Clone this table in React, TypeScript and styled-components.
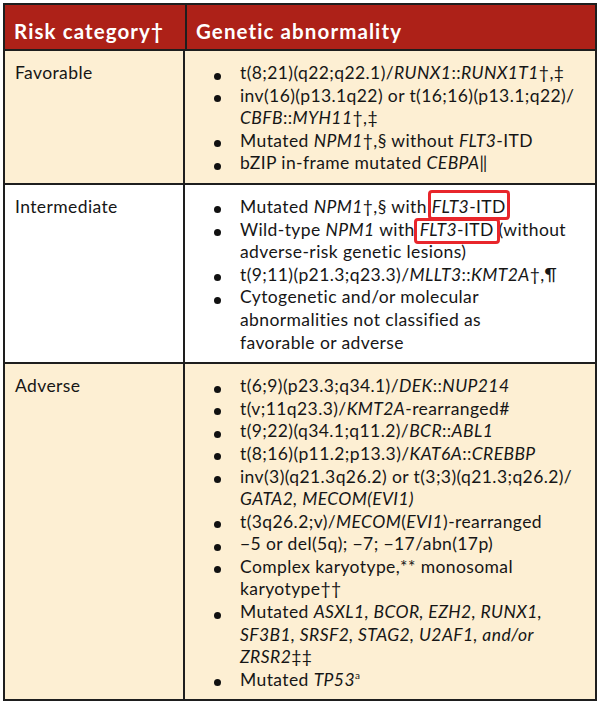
import React from "react";
import styled, { createGlobalStyle } from "styled-components";

const Global = createGlobalStyle`
  html, body { margin: 0; padding: 0; background: #ffffff; }
  body { font-family: Lato, "Noto Sans", sans-serif; color: #161616; }
`;

const Page = styled.div`
  padding: 3px;
  width: 600px;
  box-sizing: border-box;
`;

const Table = styled.div`
  border: 2px solid #1e1e1e;
  width: 594px;
  box-sizing: border-box;
  display: flex;
  flex-direction: column;
`;

const Row = styled.div<{ $bg: string; $last?: boolean }>`
  display: grid;
  grid-template-columns: 180px 1fr;
  background: ${(p) => p.$bg};
  border-bottom: ${(p) => (p.$last ? "none" : "2px solid #1e1e1e")};
`;

const HeadCell = styled.div`
  height: 44px;
  box-sizing: border-box;
  padding: 15px 0 0 9px;
  color: #ffffff;
  font-weight: 700;
  font-size: 20.5px;
  letter-spacing: 1.1px;
  line-height: 22px;
  white-space: nowrap;
  & + & { border-left: 2px solid #1e1e1e; }
`;

const CatCell = styled.div`
  padding: 11px 0 8px 10px;
  font-size: 17.5px;
  letter-spacing: 0.4px;
  line-height: 22.6px;
  border-right: 2px solid #1e1e1e;
`;

const List = styled.ul`
  list-style: none;
  margin: 0;
  padding: 11px 0 8px 0;
  font-size: 17.5px;
  letter-spacing: 0.4px;
  line-height: 22.6px;
`;

const Item = styled.li`
  position: relative;
  padding-left: 55px;
  white-space: nowrap;
  &::before {
    content: "";
    position: absolute;
    left: 28.5px;
    top: 10.5px;
    width: 7px;
    height: 7px;
    border-radius: 50%;
    background: #111;
  }
`;

const G = styled.i`
  font-style: italic;
`;

const Sup = styled.sup`
  font-size: 10px;
  line-height: 0;
  vertical-align: 7px;
`;

const Mark = styled.span<{ $t: number; $b: number; $l: number; $r: number }>`
  position: relative;
  &::after {
    content: "";
    position: absolute;
    top: ${(p) => p.$t}px;
    bottom: ${(p) => p.$b}px;
    left: ${(p) => p.$l}px;
    right: ${(p) => p.$r}px;
    border: 3px solid #e8262b;
    border-radius: 4px;
    pointer-events: none;
  }
`;

export default function App() {
  return (
    <Page>
      <Global />
      <Table>
        <Row $bg="#ad2118">
          <HeadCell>Risk category†</HeadCell>
          <HeadCell>Genetic abnormality</HeadCell>
        </Row>
        <Row $bg="#fdefd3">
          <CatCell>Favorable</CatCell>
          <List>
            <Item>
              t(8;21)(q22;q22.1)/<G>RUNX1</G>::<G>RUNX1T1</G>†,‡
            </Item>
            <Item>
              inv(16)(p13.1q22) or t(16;16)(p13.1;q22)/
              <br />
              <G>CBFB</G>::<G>MYH11</G>†,‡
            </Item>
            <Item>
              Mutated <G>NPM1</G>†,§ without <G>FLT3</G>-ITD
            </Item>
            <Item>
              bZIP in-frame mutated <G>CEBPA</G>‖
            </Item>
          </List>
        </Row>
        <Row $bg="#ffffff">
          <CatCell>Intermediate</CatCell>
          <List>
            <Item>
              Mutated <G>NPM1</G>†,§ with{" "}
              <Mark $t={-6} $b={-3} $l={-4} $r={-4}>
                <G>FLT3</G>-ITD
              </Mark>
            </Item>
            <Item>
              Wild-type <G>NPM1</G> with{" "}
              <Mark $t={-1} $b={-4} $l={-6} $r={-6}>
                <G>FLT3</G>-ITD
              </Mark>{" "}
              (without
              <br />
              adverse-risk genetic lesions)
            </Item>
            <Item>
              t(9;11)(p21.3;q23.3)/<G>MLLT3</G>::<G>KMT2A</G>†,¶
            </Item>
            <Item>
              Cytogenetic and/or molecular
              <br />
              abnormalities not classified as
              <br />
              favorable or adverse
            </Item>
          </List>
        </Row>
        <Row $bg="#fdefd3" $last>
          <CatCell>Adverse</CatCell>
          <List>
            <Item>
              t(6;9)(p23.3;q34.1)/<G>DEK</G>::<G>NUP214</G>
            </Item>
            <Item>
              t(v;11q23.3)/<G>KMT2A</G>-rearranged#
            </Item>
            <Item>
              t(9;22)(q34.1;q11.2)/<G>BCR</G>::<G>ABL1</G>
            </Item>
            <Item>
              t(8;16)(p11.2;p13.3)/<G>KAT6A</G>::<G>CREBBP</G>
            </Item>
            <Item>
              inv(3)(q21.3q26.2) or t(3;3)(q21.3;q26.2)/
              <br />
              <G>GATA2, MECOM(EVI1)</G>
            </Item>
            <Item>
              t(3q26.2;v)/<G>MECOM</G>(<G>EVI1</G>)-rearranged
            </Item>
            <Item>−5 or del(5q); −7; −17/abn(17p)</Item>
            <Item>
              Complex karyotype,** monosomal
              <br />
              karyotype††
            </Item>
            <Item>
              Mutated <G>ASXL1, BCOR, EZH2, RUNX1,</G>
              <br />
              <G>SF3B1, SRSF2, STAG2, U2AF1, and/or</G>
              <br />
              <G>ZRSR2</G>‡‡
            </Item>
            <Item>
              Mutated <G>TP53</G>
              <Sup>a</Sup>
            </Item>
          </List>
        </Row>
      </Table>
    </Page>
  );
}
